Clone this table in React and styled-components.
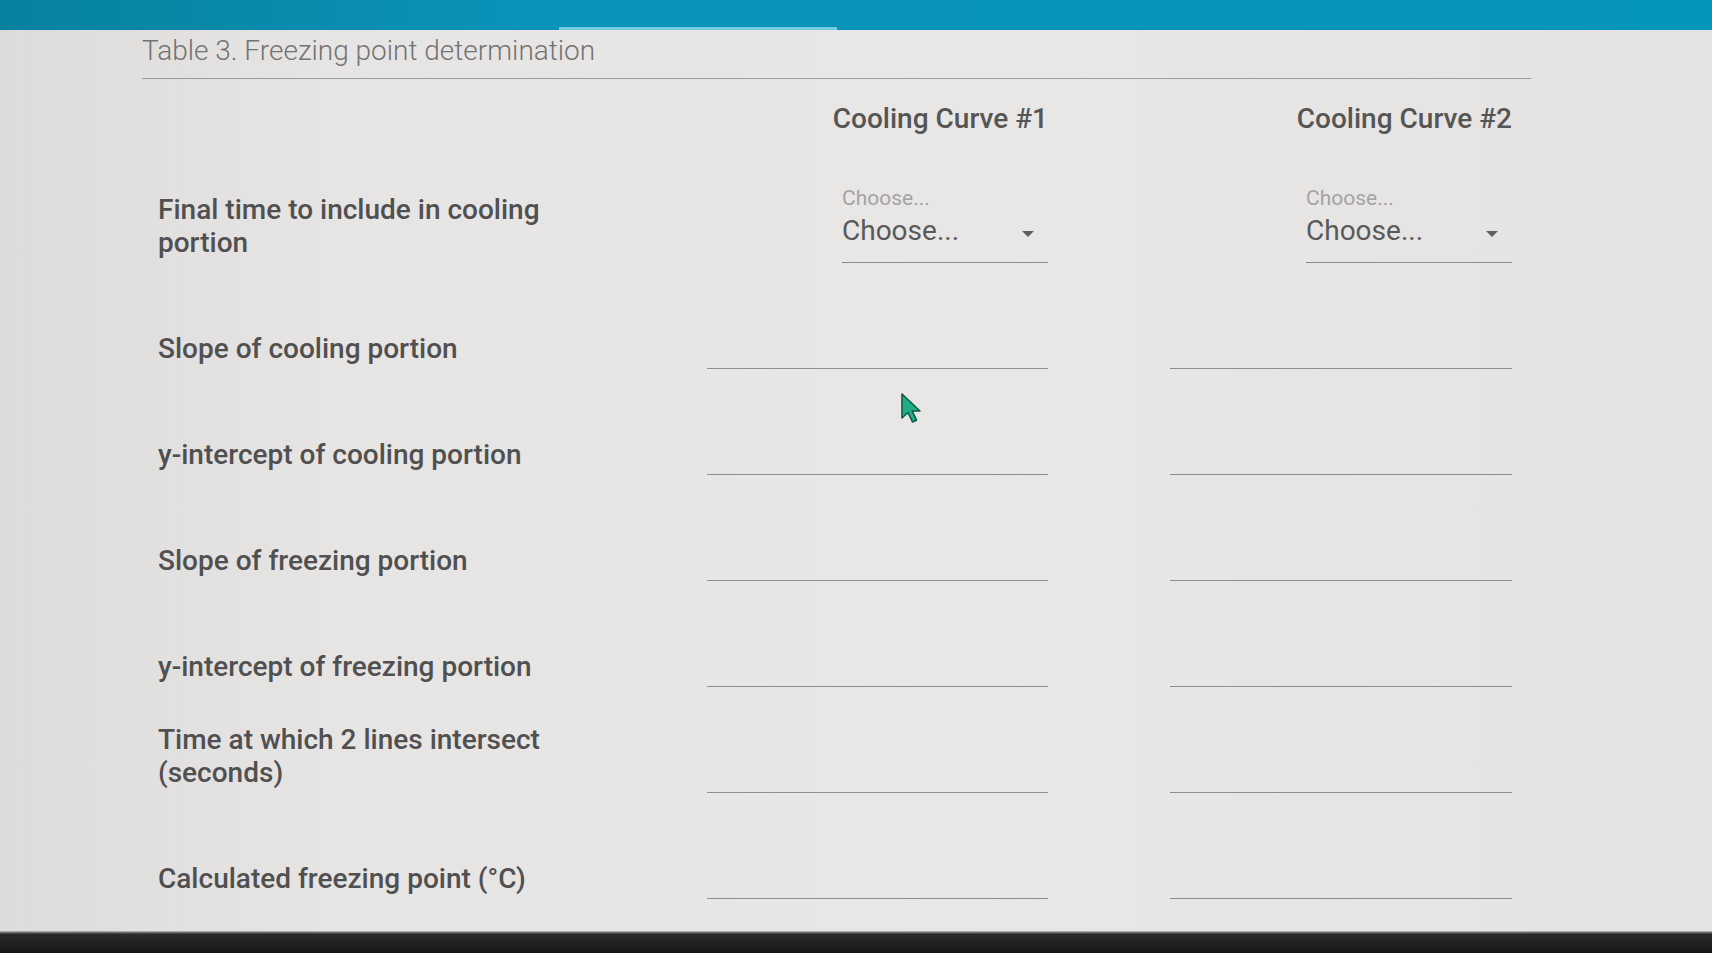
import React from "react";
import styled, { createGlobalStyle } from "styled-components";

const GlobalStyle = createGlobalStyle`
  html, body { margin: 0; padding: 0; }
  body {
    background: #e6e4e3;
    font-family: Roboto, "Noto Sans", "Liberation Sans", sans-serif;
    overflow: hidden;
  }
`;

const Screen = styled.div`
  position: relative;
  height: 953px;
  display: flex;
  flex-direction: column;
  background: linear-gradient(90deg, #dedcdb 0%, #e7e5e4 20%, #e9e7e6 60%, #e5e3e2 100%);
`;

const TopBar = styled.div`
  height: 30px;
  flex: none;
  display: flex;
  padding-left: 559px;
  background: linear-gradient(90deg, #08819f 0%, #0993b8 30%, #0596bb 100%);
`;

const TabIndicator = styled.div`
  align-self: flex-end;
  width: 278px;
  height: 3px;
  background: #74cde2;
`;

const Content = styled.main`
  flex: 1;
  padding: 5px 181px 0 142px;
`;

const Title = styled.h2`
  margin: 0;
  font-size: 28px;
  line-height: 32px;
  font-weight: 300;
  color: #737373;
  padding-bottom: 11px;
  border-bottom: 1px solid #9c9c9c;
`;

const FormGrid = styled.div`
  display: grid;
  padding-left: 16px;
  grid-template-columns: 427px 341px 342px;
  grid-template-rows: 56px 128px repeat(6, 106px);
  column-gap: 122px;
  align-items: end;
`;

const ColumnHeader = styled.div`
  align-self: end;
  text-align: right;
  font-size: 28px;
  line-height: 32px;
  font-weight: 500;
  color: #555;
`;

const RowLabel = styled.div`
  font-size: 28px;
  line-height: 33px;
  font-weight: 500;
  color: #505050;
  margin-bottom: 4px;
`;

const SelectField = styled.div`
  justify-self: end;
  width: 206px;
  display: flex;
  flex-direction: column;
  gap: 5px;
  padding-bottom: 15px;
  border-bottom: 1px solid #8e8e8e;
`;

const FloatLabel = styled.div`
  font-size: 21px;
  line-height: 24px;
  color: #a3a3a3;
`;

const SelectValue = styled.div`
  display: flex;
  align-items: center;
  justify-content: space-between;
  font-size: 28px;
  line-height: 32px;
  color: #595959;
  padding-right: 14px;
`;

const Caret = styled.span`
  width: 0;
  height: 0;
  margin-top: 6px;
  border-left: 6px solid transparent;
  border-right: 6px solid transparent;
  border-top: 6px solid #5f5f5f;
`;

const TextField = styled.div`
  height: 40px;
  border-bottom: 1px solid #8e8e8e;
`;

const Bezel = styled.div`
  height: 22px;
  flex: none;
  background: linear-gradient(180deg, #bcbcbc 0px, #2a2a2a 3px, #161616 100%);
`;

const Cursor = styled.svg`
  position: absolute;
  left: 900px;
  top: 392px;
  width: 24px;
  height: 34px;
`;

const rows = [
  "Slope of cooling portion",
  "y-intercept of cooling portion",
  "Slope of freezing portion",
  "y-intercept of freezing portion",
  "Time at which 2 lines intersect (seconds)",
  "Calculated freezing point (°C)",
];

function Select() {
  return (
    <SelectField>
      <FloatLabel>Choose...</FloatLabel>
      <SelectValue>
        <span>Choose...</span>
        <Caret />
      </SelectValue>
    </SelectField>
  );
}

export default function App() {
  return (
    <>
      <GlobalStyle />
      <Screen>
        <TopBar>
          <TabIndicator />
        </TopBar>
        <Content>
          <Title>Table 3. Freezing point determination</Title>
          <FormGrid>
            <div />
            <ColumnHeader>Cooling Curve #1</ColumnHeader>
            <ColumnHeader>Cooling Curve #2</ColumnHeader>

            <RowLabel>Final time to include in cooling portion</RowLabel>
            <Select />
            <Select />

            {rows.map((r) => (
              <React.Fragment key={r}>
                <RowLabel>{r}</RowLabel>
                <TextField />
                <TextField />
              </React.Fragment>
            ))}
          </FormGrid>
        </Content>
        <Bezel />
        <Cursor viewBox="0 0 24 34">
          <path
            d="M2 2 L2 26 L8 20.5 L12.5 30 L16.5 28.2 L12.2 19 L20 19 Z"
            fill="#1fae87"
            stroke="#0d5a45"
            strokeWidth="1.6"
            strokeLinejoin="round"
          />
        </Cursor>
      </Screen>
    </>
  );
}
